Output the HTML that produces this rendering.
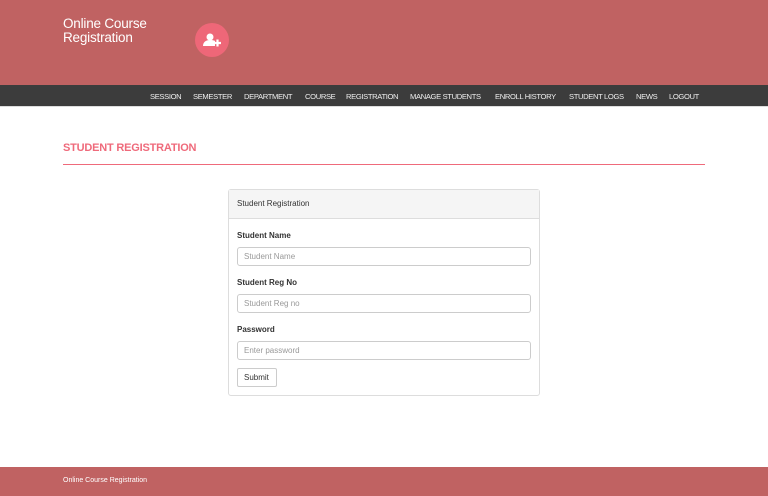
<!DOCTYPE html>
<html><head><style>
*{box-sizing:border-box;margin:0;padding:0}
body{width:768px;height:496px;position:relative;font-family:"Liberation Sans",sans-serif;background:#fff;overflow:hidden}
.hdr{position:absolute;left:0;top:0;width:768px;height:85px;background:#c06262}
.brand{position:absolute;left:63px;top:17px;color:#fff;font-size:13.5px;line-height:14px;letter-spacing:-0.2px}
.ico{position:absolute;left:195px;top:23px;width:34px;height:34px;border-radius:50%;background:#ee6778}
.nav{position:absolute;left:0;top:85px;width:768px;height:22px;background:#3c3c3c;border-bottom:1px solid #ddd}
.nav span{position:absolute;top:7px;color:#eee;font-size:7.6px;letter-spacing:-0.35px;white-space:nowrap}
.title{position:absolute;left:63px;top:142px;color:#ef6a7b;font-size:11px;font-weight:bold;letter-spacing:-0.2px}
.line{position:absolute;left:63px;top:164px;width:642px;height:1px;background:#ef6a7b}
.panel{position:absolute;left:228px;top:189px;width:312px;height:207px;border:1px solid #ddd;border-radius:3px}
.ph{height:29px;background:#f5f5f5;border-bottom:1px solid #ddd;font-size:8px;color:#333;padding:9px 8px}
.lbl{position:absolute;left:8px;font-size:8px;font-weight:bold;color:#333}
.in{position:absolute;left:8px;width:294px;height:19px;border:1px solid #ccc;border-radius:3px;font-size:8px;color:#999;padding:4px 6px}
.btn{position:absolute;left:8px;top:178px;width:40px;height:19px;border:1px solid #ccc;border-radius:2px;font-size:8px;color:#333;padding:4px 6px}
.ftr{position:absolute;left:0;top:467px;width:768px;height:29px;background:#c06262;color:#fff;font-size:7px;padding:10px 63px}
</style></head><body>
<div class="hdr"><div class="brand">Online Course<br>Registration</div>
<div class="ico"><svg width="34" height="34" viewBox="0 0 34 34"><circle cx="15" cy="14" r="3.5" fill="#fff"/><path d="M8 23c0-4 3-6 7-6s5 1 5 1v5z" fill="#fff"/><path d="M19 20h7M22.5 16.5v7" stroke="#fff" stroke-width="2.2"/></svg></div></div>
<div class="nav">
<span style="left:150px">SESSION</span><span style="left:193px">SEMESTER</span><span style="left:244px">DEPARTMENT</span><span style="left:305px">COURSE</span><span style="left:346px">REGISTRATION</span><span style="left:410px">MANAGE STUDENTS</span><span style="left:495px">ENROLL HISTORY</span><span style="left:569px">STUDENT LOGS</span><span style="left:636px">NEWS</span><span style="left:669px">LOGOUT</span>
</div>
<div class="title">STUDENT REGISTRATION</div>
<div class="line"></div>
<div class="panel"><div class="ph">Student Registration</div>
<div class="lbl" style="top:41px">Student Name</div><div class="in" style="top:57px">Student Name</div>
<div class="lbl" style="top:88px">Student Reg No</div><div class="in" style="top:104px">Student Reg no</div>
<div class="lbl" style="top:135px">Password</div><div class="in" style="top:151px">Enter password</div>
<div class="btn">Submit</div></div>
<div class="ftr">Online Course Registration</div>
</body></html>
